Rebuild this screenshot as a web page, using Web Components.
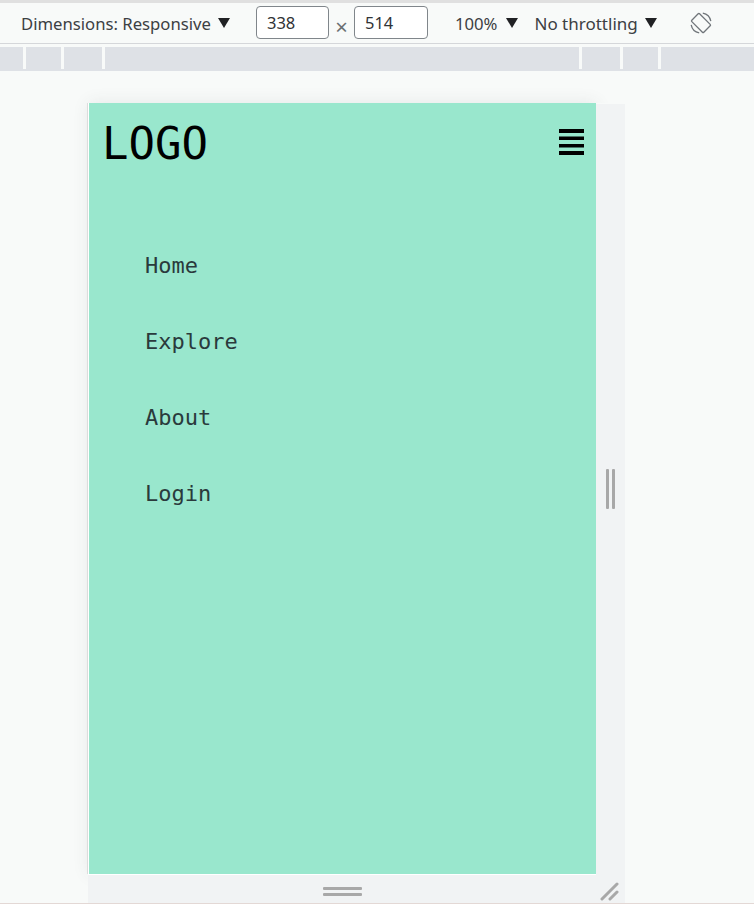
<!DOCTYPE html>
<html>
<head>
<meta charset="utf-8">
<title>Responsive</title>
<style>
    html, body { margin: 0; height: 100%; }
    body { box-sizing: border-box; border-bottom: 1px solid #e3d8d5; background: #f8faf9; font-family: "Noto Sans", "Open Sans", sans-serif; overflow: hidden; }
</style>
</head>
<body>
<dev-toolbar></dev-toolbar>
<dev-ruler></dev-ruler>
<device-frame>
    <site-header logo="LOGO"></site-header>
    <nav-menu>
        <nav-link>Home</nav-link>
        <nav-link>Explore</nav-link>
        <nav-link>About</nav-link>
        <nav-link>Login</nav-link>
    </nav-menu>
</device-frame>

<script>
/* the dropdown labels in the devtools bar: text + little black triangle */
class ToolbarSelect extends HTMLElement {
    constructor() {
        super()
        this.attachShadow({ mode: 'open' }).innerHTML = `<style>
            :host { display: inline-flex; align-items: flex-start; gap: 7px; color: #3c4043; font-size: 16.7px; line-height: 24px; margin-top: -1px; white-space: nowrap; }
            svg { margin-top: 6px; }
        </style>
        <slot></slot>
        <svg width="12" height="10" viewBox="0 0 12 10"><polygon points="0,0 12,0 6,10" fill="#202124"/></svg>`
    }
}

class DevToolbar extends HTMLElement {
    constructor() {
        super()
        this.attachShadow({ mode: 'open' }).innerHTML = `<style>
            :host { display: flex; box-sizing: border-box; height: 44px; align-items: flex-start; padding: 10px 0 0 21px;
                    border-top: 3px solid #e0e0e0; border-bottom: 1px solid #d5d7da; background: #f8faf9; }
            .size { display: flex; margin-left: 26px; margin-top: -7px; }
            .box { box-sizing: border-box; width: 73px; height: 33px; padding: 3px 0 0 10px; border: 1px solid #80868b; border-radius: 4px;
                   background: #fff; color: #303336; font-size: 16.5px; line-height: 26px; }
            .box + .times + .box { width: 74px; }
            .times { width: 25px; text-align: center; color: #6b6f73; font-size: 22px; line-height: 40px; }
            .zoom { margin-left: 27px; gap: 8px; }
            .throttle { margin-left: 17px; font-size: 17px; }
            svg { margin: -2px 0 0 32px; }
        </style>
        <toolbar-select>Dimensions: Responsive</toolbar-select>
        <div class="size"><div class="box">338</div><div class="times">×</div><div class="box">514</div></div>
        <toolbar-select class="zoom">100%</toolbar-select>
        <toolbar-select class="throttle">No throttling</toolbar-select>
        <svg width="24" height="24" viewBox="0 0 24 24" fill="none" stroke="#70757a" stroke-width="1.3">
            <rect x="3.5" y="6.5" width="17" height="11" rx="1" transform="rotate(45 12 12)"/>
            <path d="M13.8 2.2A10 10 0 0 1 21.8 10.2M10.2 21.8A10 10 0 0 1 2.2 13.8"/>
        </svg>`
    }
}

/* media query bar, white ticks sit at the end of each segment */
class DevRuler extends HTMLElement {
    constructor() {
        super()
        const widths = [26, 38, 41, 477, 41, 38]
        this.attachShadow({ mode: 'open' }).innerHTML = `<style>
            :host { display: flex; height: 24px; margin-top: 3px; background: #dee1e6; }
            div { box-sizing: border-box; height: 22px; border-right: 3px solid #f8faf9; }
        </style>` + widths.map(w => `<div style="width:${w}px"></div>`).join('')
    }
}

/* emulated viewport with its resize handles */
class DeviceFrame extends HTMLElement {
    constructor() {
        super()
        this.attachShadow({ mode: 'open' }).innerHTML = `<style>
            :host { display: grid; grid-template-columns: 507px 29px; grid-template-rows: 771px 29px; width: 537px; box-sizing: border-box;
                    margin: 32px 0 0 88px; padding-left: 1px; }
            .screen { background: #99e7cd; color: #000; box-shadow: -1px 0 0 #fff, -2px 0 0 #dcdcdc, 0 0 16px rgba(60, 64, 67, .1); }
            .side, .bottom, .corner { display: flex; align-items: center; justify-content: center; background: #f1f3f4; }
            .side { gap: 3px; box-sizing: border-box; border-top: 1px solid #f8faf9; }
            .side i { width: 3px; height: 40px; border-radius: 1px; background: #a8a8a8; }
            .bottom { flex-direction: column; gap: 3px; padding-top: 5px; box-sizing: border-box; margin-left: -1px; border-top: 1px solid #fff; }
            .bottom i { width: 39px; height: 3px; border-radius: 1px; background: #a8a8a8; }
            svg { margin-top: 4px; }
        </style>
        <div class="screen"><slot></slot></div>
        <div class="side"><i></i><i></i></div>
        <div class="bottom"><i></i><i></i></div>
        <div class="corner">
            <svg width="22" height="20" viewBox="0 0 22 20" stroke="#a8a8a8" stroke-width="3" stroke-linecap="round"><path d="M2 18 17 3M10 18l7-7"/></svg>
        </div>`
    }
}

class SiteHeader extends HTMLElement {
    constructor() {
        super()
        this.attachShadow({ mode: 'open' }).innerHTML = `<style>
            :host { display: flex; justify-content: space-between; align-items: flex-start; padding: 15px 12px 0 13px; height: 64px; }
            .logo { font: 44px/52px "DejaVu Sans Mono", "Liberation Mono", monospace; color: #000; }
            svg { margin-top: 11px; }
        </style>
        <div class="logo">${this.getAttribute('logo')}</div>
        <svg width="25" height="27" viewBox="0 0 25 27" fill="#000">
            <rect y="0" width="25" height="4"/><rect y="7.5" width="25" height="3.5"/><rect y="15" width="25" height="3.5"/><rect y="22" width="25" height="4"/>
        </svg>`
    }
}

class NavMenu extends HTMLElement {
    constructor() {
        super()
        this.attachShadow({ mode: 'open' }).innerHTML = `<style>
            :host { display: flex; flex-direction: column; gap: 48px; padding: 70px 0 0 56px; }
        </style><slot></slot>`
    }
}

class NavLink extends HTMLElement {
    constructor() {
        super()
        this.attachShadow({ mode: 'open' }).innerHTML = `<style>
            :host { display: block; font: 22px/28px "DejaVu Sans Mono", "Liberation Mono", monospace; color: #2a3a3c; }
        </style><slot></slot>`
    }
}

customElements.define('toolbar-select', ToolbarSelect)
customElements.define('dev-toolbar', DevToolbar)
customElements.define('dev-ruler', DevRuler)
customElements.define('device-frame', DeviceFrame)
customElements.define('site-header', SiteHeader)
customElements.define('nav-menu', NavMenu)
customElements.define('nav-link', NavLink)
</script>
</body>
</html>
